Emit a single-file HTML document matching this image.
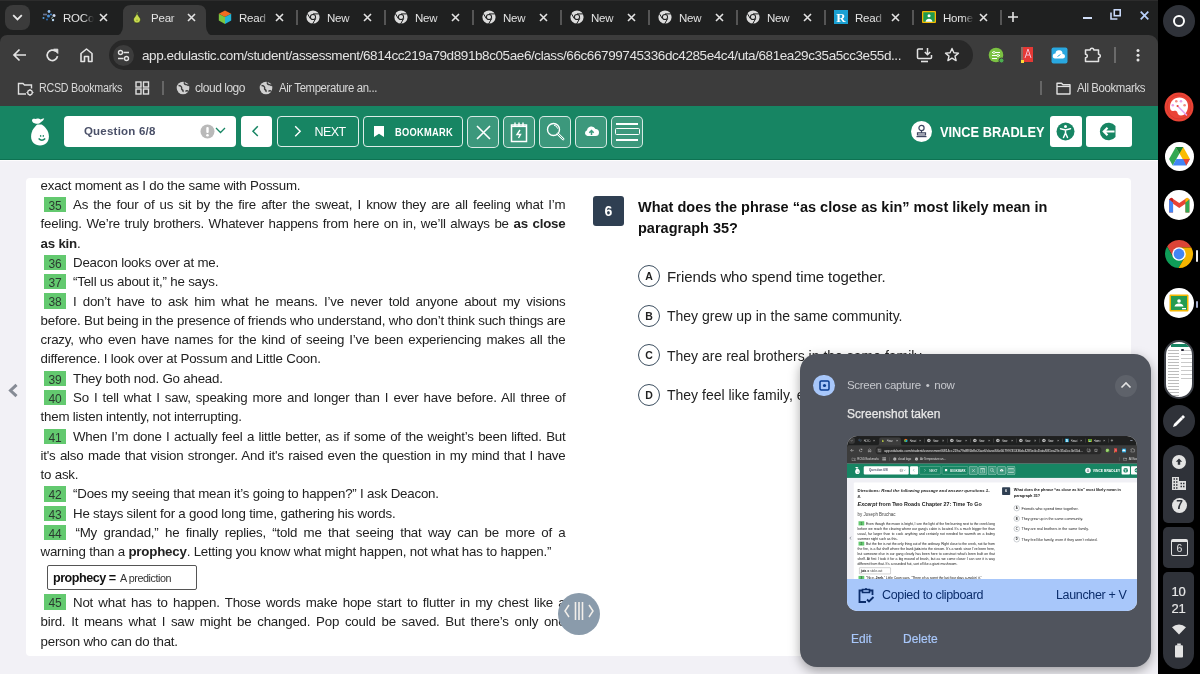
<!DOCTYPE html>
<html><head><meta charset="utf-8"><style>
*{margin:0;padding:0;box-sizing:border-box}
html,body{width:1200px;height:674px;overflow:hidden;background:#000;font-family:"Liberation Sans",sans-serif}
body>div{will-change:transform}
.a{position:absolute}
#win{position:absolute;left:0;top:0;width:1158px;height:674px;background:#f2f1f6;overflow:hidden}
.tabs{position:absolute;left:0;top:0;width:1158px;height:35px;background:#1f2020;border-top:1px solid #2c2c2c}
.toolbar{position:absolute;left:0;top:35px;width:1158px;height:71px;background:#3c3c3c;border-top-left-radius:7px;border-top-right-radius:9px}
.hdr{position:absolute;left:0;top:106px;width:1158px;height:54px;background:#178563;border-bottom:1.6px solid #0e7252;box-shadow:0 1px 0 rgba(255,255,255,.8)}
.card{position:absolute;left:26px;top:178px;width:1105px;height:478px;background:#fff;border-radius:4px}
.shelf{position:absolute;left:1158px;top:0;width:42px;height:674px;background:#000}
/* tabs */
.tab{position:absolute;top:0;width:88px;height:35px}
.ti{position:absolute;left:6px;top:9px}
.tt{position:absolute;left:28px;top:11.5px;font-size:11.5px;line-height:13px;color:#e3e3e3;width:31px;overflow:hidden;white-space:nowrap;letter-spacing:-0.2px;-webkit-mask-image:linear-gradient(90deg,#000 65%,transparent 100%)}
.tx{position:absolute;left:64px;top:13px;width:9px;height:9px}
.tx svg{display:block}
.tsep{position:absolute;top:10px;width:1.5px;height:15px;background:#555}
.atab{position:absolute;left:113px;top:5px;width:103px;height:31px}
.dd{position:absolute;left:5px;top:5px;width:25px;height:25px;border-radius:8px;background:#3b3b3b}
/* passage */
.pl{position:absolute;left:40.5px;width:525px;font-size:13.3px;letter-spacing:-0.2px;line-height:19.3px;color:#222;white-space:nowrap;margin-top:0.85px}
.pl.j{text-align:justify;text-align-last:justify;white-space:normal}
.pl.ind{left:73px;width:492.5px}
.pl b{font-weight:bold}
.pn{position:absolute;left:44px;width:22px;height:15.3px;background:#63c96f;color:#2b3a30;font-size:12px;line-height:18px;text-align:center;letter-spacing:-0.1px}
.pbox{position:absolute;left:47px;top:564.5px;width:150px;height:25px;border:1.3px solid #555;border-radius:2px;line-height:22px;padding-left:5px;color:#111;white-space:nowrap}
/* header */
.hbtn{position:absolute;top:116px;height:31px;border-radius:4px}
.wbtn{background:#fff}
.obtn{border:1.5px solid rgba(255,255,255,.85)}
.ibtn{border:1.5px solid rgba(255,255,255,.8);background:rgba(255,255,255,.16);width:32px;top:116px;height:32px;border-radius:5px}
/* question */
.qn{position:absolute;left:593px;top:196px;width:31px;height:30px;background:#2f3f52;border-radius:3px;color:#fff;font-weight:bold;font-size:14px;line-height:30px;text-align:center}
.qt{position:absolute;left:638px;top:197px;font-size:14.5px;font-weight:bold;line-height:20.5px;color:#111;white-space:nowrap}
.opt{position:absolute;left:638px;width:22px;height:22px;border:1.2px solid #3d4f60;border-radius:50%;font-size:10.5px;font-weight:bold;color:#222;text-align:center;line-height:20px}
.ot{position:absolute;left:667px;font-size:14px;color:#222;white-space:nowrap;line-height:16px}
/* popup */
.popup{position:absolute;left:800px;top:354px;width:351px;height:313px;background:#50545d;border-radius:17px;box-shadow:0 4px 12px rgba(0,0,0,.35);overflow:hidden}
.pill{position:absolute;left:1163px;width:31px;background:#2f3239}
</style></head><body>
<div id="win">

<div class="tabs"></div><div class="a" style="left:0;top:30px;width:1158px;height:20px;background:#1f2020"></div>
<div class="dd"><svg class="a" style="left:7px;top:9px" width="11" height="7" viewBox="0 0 11 7"><path d="M1.2 1.2L5.5 5.4 9.8 1.2" stroke="#e8e8e8" stroke-width="1.8" fill="none"/></svg></div>
<svg class="atab" viewBox="0 0 103 31"><path d="M0 31 Q10 31 10 21 V8 Q10 0 18 0 H85 Q93 0 93 8 V21 Q93 31 103 31 Z" fill="#3c3c3c"/></svg>
<div class="tab" style="left:35px"><svg class="ti" width="16" height="16" viewBox="0 0 16 16"><g fill="#4a90d9"><circle cx="8" cy="2.5" r="1.4" fill="#9cc3f0"/><circle cx="3" cy="5.5" r="0.9" fill="#7a86a8"/><circle cx="5" cy="5.5" r="0.9" fill="#7a86a8"/><circle cx="7.5" cy="7" r="1.5"/><circle cx="10" cy="5.5" r="0.9"/><circle cx="13" cy="6.5" r="1.5" fill="#cfd8f0"/><circle cx="2.5" cy="9" r="1" fill="#5aa0e0"/><circle cx="6" cy="10.5" r="1" fill="#2a6ab0"/><circle cx="12" cy="11" r="1.2" fill="#b8d8f0"/><path d="M10 9.5l2.5-2" stroke="#8aa" stroke-width="1"/></g></svg><span class="tt">ROCo</span><span class="tx"><svg viewBox="0 0 9 9" width="9" height="9"><path d="M1 1L8 8M8 1L1 8" stroke="#e3e3e3" stroke-width="1.6"/></svg></span></div>
<div class="tab" style="left:123px"><svg class="ti" width="16" height="16" viewBox="0 0 16 16"><path d="M8 5c-.7 0-1 .6-1.2 1.4-.3 1-2.3 2-2.3 4.3 0 2 1.6 3.3 3.5 3.3s3.5-1.3 3.5-3.3c0-2.3-2-3.3-2.3-4.3C9 5.6 8.7 5 8 5z" fill="#c9dc4e" stroke="#26301a" stroke-width=".6"/><path d="M7.8 4.6l.9-1.2" stroke="#7bb03c" stroke-width="1"/><circle cx="8" cy="11.3" r=".9" fill="#9aaa40"/></svg><span class="tt">Pear</span><span class="tx"><svg viewBox="0 0 9 9" width="9" height="9"><path d="M1 1L8 8M8 1L1 8" stroke="#e3e3e3" stroke-width="1.6"/></svg></span></div>
<div class="tab" style="left:211px"><svg class="ti" width="16" height="16" viewBox="0 0 16 16"><path d="M8 1.5l6.2 3.2L8 8 1.8 4.7z" fill="#f26b21"/><path d="M1.8 4.7L8 8v7L1.8 11.6z" fill="#7dc63e"/><path d="M14.2 4.7L8 8v7l6.2-3.4z" fill="#21b5d6"/></svg><span class="tt">Read</span><span class="tx"><svg viewBox="0 0 9 9" width="9" height="9"><path d="M1 1L8 8M8 1L1 8" stroke="#e3e3e3" stroke-width="1.6"/></svg></span></div>
<div class="tab" style="left:299px"><svg class="ti" width="16" height="16" viewBox="0 0 16 16"><circle cx="8" cy="8" r="6.6" fill="#dcdcdc"/><circle cx="8" cy="8" r="3.1" fill="#1f2020"/><circle cx="8" cy="8" r="2.1" fill="#dcdcdc"/><path d="M8 4.9h6.2M5.3 9.6L2.2 4.3M10.7 9.6L7.6 14.9" stroke="#1f2020" stroke-width="1"/></svg><span class="tt">New</span><span class="tx"><svg viewBox="0 0 9 9" width="9" height="9"><path d="M1 1L8 8M8 1L1 8" stroke="#e3e3e3" stroke-width="1.6"/></svg></span></div>
<div class="tab" style="left:387px"><svg class="ti" width="16" height="16" viewBox="0 0 16 16"><circle cx="8" cy="8" r="6.6" fill="#dcdcdc"/><circle cx="8" cy="8" r="3.1" fill="#1f2020"/><circle cx="8" cy="8" r="2.1" fill="#dcdcdc"/><path d="M8 4.9h6.2M5.3 9.6L2.2 4.3M10.7 9.6L7.6 14.9" stroke="#1f2020" stroke-width="1"/></svg><span class="tt">New</span><span class="tx"><svg viewBox="0 0 9 9" width="9" height="9"><path d="M1 1L8 8M8 1L1 8" stroke="#e3e3e3" stroke-width="1.6"/></svg></span></div>
<div class="tab" style="left:475px"><svg class="ti" width="16" height="16" viewBox="0 0 16 16"><circle cx="8" cy="8" r="6.6" fill="#dcdcdc"/><circle cx="8" cy="8" r="3.1" fill="#1f2020"/><circle cx="8" cy="8" r="2.1" fill="#dcdcdc"/><path d="M8 4.9h6.2M5.3 9.6L2.2 4.3M10.7 9.6L7.6 14.9" stroke="#1f2020" stroke-width="1"/></svg><span class="tt">New</span><span class="tx"><svg viewBox="0 0 9 9" width="9" height="9"><path d="M1 1L8 8M8 1L1 8" stroke="#e3e3e3" stroke-width="1.6"/></svg></span></div>
<div class="tab" style="left:563px"><svg class="ti" width="16" height="16" viewBox="0 0 16 16"><circle cx="8" cy="8" r="6.6" fill="#dcdcdc"/><circle cx="8" cy="8" r="3.1" fill="#1f2020"/><circle cx="8" cy="8" r="2.1" fill="#dcdcdc"/><path d="M8 4.9h6.2M5.3 9.6L2.2 4.3M10.7 9.6L7.6 14.9" stroke="#1f2020" stroke-width="1"/></svg><span class="tt">New</span><span class="tx"><svg viewBox="0 0 9 9" width="9" height="9"><path d="M1 1L8 8M8 1L1 8" stroke="#e3e3e3" stroke-width="1.6"/></svg></span></div>
<div class="tab" style="left:651px"><svg class="ti" width="16" height="16" viewBox="0 0 16 16"><circle cx="8" cy="8" r="6.6" fill="#dcdcdc"/><circle cx="8" cy="8" r="3.1" fill="#1f2020"/><circle cx="8" cy="8" r="2.1" fill="#dcdcdc"/><path d="M8 4.9h6.2M5.3 9.6L2.2 4.3M10.7 9.6L7.6 14.9" stroke="#1f2020" stroke-width="1"/></svg><span class="tt">New</span><span class="tx"><svg viewBox="0 0 9 9" width="9" height="9"><path d="M1 1L8 8M8 1L1 8" stroke="#e3e3e3" stroke-width="1.6"/></svg></span></div>
<div class="tab" style="left:739px"><svg class="ti" width="16" height="16" viewBox="0 0 16 16"><circle cx="8" cy="8" r="6.6" fill="#dcdcdc"/><circle cx="8" cy="8" r="3.1" fill="#1f2020"/><circle cx="8" cy="8" r="2.1" fill="#dcdcdc"/><path d="M8 4.9h6.2M5.3 9.6L2.2 4.3M10.7 9.6L7.6 14.9" stroke="#1f2020" stroke-width="1"/></svg><span class="tt">New</span><span class="tx"><svg viewBox="0 0 9 9" width="9" height="9"><path d="M1 1L8 8M8 1L1 8" stroke="#e3e3e3" stroke-width="1.6"/></svg></span></div>
<div class="tab" style="left:827px"><svg class="ti" width="16" height="16" viewBox="0 0 16 16"><rect x="1" y="1" width="14" height="14" fill="#1aa0d2"/><text x="8" y="13" font-family="Liberation Serif" font-weight="bold" font-size="13" fill="#fff" text-anchor="middle">R</text></svg><span class="tt">Read</span><span class="tx"><svg viewBox="0 0 9 9" width="9" height="9"><path d="M1 1L8 8M8 1L1 8" stroke="#e3e3e3" stroke-width="1.6"/></svg></span></div>
<div class="tab" style="left:915px"><svg class="ti" width="16" height="16" viewBox="0 0 16 16"><rect x="1" y="2" width="14" height="12" rx="1" fill="#f6b800"/><rect x="2.3" y="3.3" width="11.4" height="9.4" fill="#1e9b4f"/><circle cx="8" cy="6.8" r="1.5" fill="#fff"/><path d="M4.5 12.7c.3-2 1.8-3 3.5-3s3.2 1 3.5 3z" fill="#fff"/></svg><span class="tt">Home</span><span class="tx"><svg viewBox="0 0 9 9" width="9" height="9"><path d="M1 1L8 8M8 1L1 8" stroke="#e3e3e3" stroke-width="1.6"/></svg></span></div>
<div class="tsep" style="left:296px"></div>
<div class="tsep" style="left:384px"></div>
<div class="tsep" style="left:472px"></div>
<div class="tsep" style="left:560px"></div>
<div class="tsep" style="left:648px"></div>
<div class="tsep" style="left:736px"></div>
<div class="tsep" style="left:824px"></div>
<div class="tsep" style="left:912px"></div>
<div class="tsep" style="left:1000px"></div>

<svg class="a" style="left:1007px;top:11px" width="12" height="12" viewBox="0 0 12 12"><path d="M6 1V11M1 6H11" stroke="#e3e3e3" stroke-width="1.6"/></svg>
<div class="a" style="left:1083px;top:17.3px;width:9px;height:1.6px;background:#d0def8"></div>
<svg class="a" style="left:1110px;top:9px" width="11" height="11" viewBox="0 0 11 11"><rect x="4.3" y="0.8" width="5.9" height="5.9" fill="#111" stroke="#c8d8f8" stroke-width="1.6"/><path d="M1 3.6V10H7.4" stroke="#c8d8f8" stroke-width="1.6" fill="none"/></svg>
<svg class="a" style="left:1139.5px;top:10.5px" width="9" height="9" viewBox="0 0 9 9"><path d="M.7.7L8.3 8.3M8.3.7L.7 8.3" stroke="#b8d0fa" stroke-width="1.7"/></svg>


<div class="toolbar"></div>
<svg class="a" style="left:12px;top:48px" width="15" height="14" viewBox="0 0 15 14"><path d="M14 7H2M7.5 1.5L2 7l5.5 5.5" stroke="#e3e3e3" stroke-width="1.7" fill="none"/></svg>
<svg class="a" style="left:45px;top:48px" width="15" height="15" viewBox="0 0 15 15"><path d="M12.5 8.2A5.2 5.2 0 1 1 10.8 3.4" stroke="#e3e3e3" stroke-width="1.7" fill="none"/><path d="M8.6 1.2h4.2v4.2z" fill="#e3e3e3" stroke="#e3e3e3" stroke-width="1"/></svg>
<svg class="a" style="left:79px;top:47px" width="15" height="16" viewBox="0 0 15 16"><path d="M2 14.5V6.5L7.5 2 13 6.5V14.5H9.5V9.5H5.5V14.5Z" stroke="#e3e3e3" stroke-width="1.6" fill="none" stroke-linejoin="round"/></svg>
<div class="a" style="left:109px;top:40px;width:864px;height:30px;border-radius:15px;background:#282828"></div>
<div class="a" style="left:113px;top:45px;width:21px;height:21px;border-radius:50%;background:#3c3c3c"></div>
<svg class="a" style="left:116px;top:48px" width="15" height="15" viewBox="0 0 15 15"><circle cx="4.5" cy="4.5" r="2" stroke="#e3e3e3" stroke-width="1.4" fill="none"/><path d="M7.5 4.5H13M2 10.5H7.5" stroke="#e3e3e3" stroke-width="1.4"/><circle cx="10.5" cy="10.5" r="2" stroke="#e3e3e3" stroke-width="1.4" fill="none"/></svg>
<div class="a" style="left:142px;top:48px;font-size:13.5px;letter-spacing:-0.415px;color:#e3e3e3;white-space:nowrap;line-height:16px">app.edulastic.com/student/assessment/6814cc219a79d891b8c05ae6/class/66c66799745336dc4285e4c4/uta/681ea29c35a5cc3e55d...</div>
<svg class="a" style="left:916px;top:47px" width="17" height="16" viewBox="0 0 17 16"><path d="M7 2H2.5A1 1 0 0 0 1.5 3V10.5A1 1 0 0 0 2.5 11.5H14.5A1 1 0 0 0 15.5 10.5V8" stroke="#e3e3e3" stroke-width="1.5" fill="none"/><path d="M11.5 1V7.5M8.8 5l2.7 2.7L14.2 5" stroke="#e3e3e3" stroke-width="1.5" fill="none"/><path d="M5 14.5H12" stroke="#e3e3e3" stroke-width="1.6"/></svg>
<svg class="a" style="left:944px;top:47px" width="16" height="16" viewBox="0 0 16 16"><path d="M8 1.5l1.9 4.2 4.6.4-3.5 3 1.1 4.5L8 11.2 3.9 13.6 5 9.1l-3.5-3 4.6-.4z" stroke="#e3e3e3" stroke-width="1.4" fill="none" stroke-linejoin="round"/></svg>
<svg class="a" style="left:988px;top:47px" width="17" height="17" viewBox="0 0 17 17"><circle cx="8" cy="8" r="7.3" fill="#7bc242"/><path d="M4 5.5H12M4 8.5H12M4 11.5H9" stroke="#fff" stroke-width="1"/><circle cx="6" cy="5.5" r="1.1" fill="#7bc242" stroke="#fff" stroke-width=".8"/><circle cx="10" cy="8.5" r="1.1" fill="#7bc242" stroke="#fff" stroke-width=".8"/><circle cx="13.5" cy="13.5" r="2.5" fill="#4caf50" stroke="#3c3c3c" stroke-width="1"/></svg>
<svg class="a" style="left:1020px;top:46px" width="14" height="18" viewBox="0 0 14 18"><rect x="1" y="1" width="12" height="15" fill="#e53935"/><rect x="1" y="1" width="2" height="15" fill="#8d6e63"/><path d="M5 12l3-9 3 9M6 9h4" stroke="#f8bbd0" stroke-width="1" fill="none"/><rect x="1" y="14" width="3" height="3" fill="#fdd835"/></svg>
<svg class="a" style="left:1051px;top:47px" width="17" height="17" viewBox="0 0 17 17"><rect x="0.5" y="0.5" width="16" height="16" rx="2" fill="#29a8e0"/><path d="M4 11.5a2.5 2.5 0 0 1 .5-5 3.5 3.5 0 0 1 7 .5 2.2 2.2 0 0 1 .5 4.5z" fill="#fff"/><path d="M6.5 9.5l3-2" stroke="#29a8e0" stroke-width="1"/></svg>
<svg class="a" style="left:1083px;top:46px" width="20" height="18" viewBox="0 0 20 18"><path d="M2.5 4H7.2A1.8 1.8 0 0 1 10.8 4H15.5V8.2A1.8 1.8 0 0 1 15.5 11.8V15.5H2.5V11.8A1.8 1.8 0 0 0 2.5 8.2Z" stroke="#e3e3e3" stroke-width="1.5" fill="none" stroke-linejoin="round"/></svg>
<div class="a" style="left:1114px;top:47px;width:1.5px;height:16px;background:#6a6a6a"></div>
<svg class="a" style="left:1135px;top:46px" width="6" height="18" viewBox="0 0 6 18"><circle cx="3" cy="4.5" r="1.5" fill="#e3e3e3"/><circle cx="3" cy="9.2" r="1.5" fill="#e3e3e3"/><circle cx="3" cy="13.9" r="1.5" fill="#e3e3e3"/></svg>
<!-- bookmarks -->
<svg class="a" style="left:17px;top:82px" width="17" height="14" viewBox="0 0 17 14"><path d="M9 12H1.5V1.5H6L7.5 3H14.5V6.5" stroke="#e0e0e0" stroke-width="1.4" fill="none"/><circle cx="13" cy="10.5" r="2.3" stroke="#e0e0e0" stroke-width="1.3" fill="none"/><path d="M13 7v1.2M13 12.8V14M9.5 10.5h1.2M15.3 10.5h1.2" stroke="#e0e0e0" stroke-width="1.2"/></svg>
<div class="a" style="left:38.8px;top:82px;font-size:12px;letter-spacing:-0.3px;color:#d8d8d8;white-space:nowrap;line-height:13px;transform:scaleX(0.893);transform-origin:0 0">RCSD Bookmarks</div>
<svg class="a" style="left:135px;top:81px" width="15" height="14" viewBox="0 0 15 14"><rect x="1" y="1" width="5" height="5" stroke="#e0e0e0" stroke-width="1.4" fill="none"/><rect x="8.5" y="1" width="5" height="5" stroke="#e0e0e0" stroke-width="1.4" fill="none"/><rect x="1" y="8" width="5" height="5" stroke="#e0e0e0" stroke-width="1.4" fill="none"/><rect x="8.5" y="8" width="5" height="5" stroke="#e0e0e0" stroke-width="1.4" fill="none"/></svg>
<div class="a" style="left:162px;top:81px;width:1.5px;height:14px;background:#666"></div>
<svg class="a" style="left:176px;top:81px" width="14" height="14" viewBox="0 0 14 14"><circle cx="7" cy="7" r="6.3" fill="#d0d0d0"/><path d="M2.5 4.5c1.5 0 2.5.5 3 1.5s-.5 2 .5 2.5 1.5 1 1 2.5M8.5 1.2c-.5 1 0 2 1 2.3s2.5.2 3.2 1.5M12 10c-1-.5-2-.3-2.5.5" stroke="#3c3c3c" stroke-width="1.4" fill="none"/></svg>
<div class="a" style="left:195px;top:82px;font-size:12px;letter-spacing:-0.47px;color:#d8d8d8;white-space:nowrap;line-height:13px">cloud logo</div>
<svg class="a" style="left:259px;top:81px" width="14" height="14" viewBox="0 0 14 14"><circle cx="7" cy="7" r="6.3" fill="#d0d0d0"/><path d="M2.5 4.5c1.5 0 2.5.5 3 1.5s-.5 2 .5 2.5 1.5 1 1 2.5M8.5 1.2c-.5 1 0 2 1 2.3s2.5.2 3.2 1.5M12 10c-1-.5-2-.3-2.5.5" stroke="#3c3c3c" stroke-width="1.4" fill="none"/></svg>
<div class="a" style="left:278.6px;top:82px;font-size:12px;letter-spacing:-0.4px;transform:scaleX(0.947);transform-origin:0 0;color:#d8d8d8;white-space:nowrap;line-height:13px">Air Temperature an...</div>
<div class="a" style="left:1040px;top:81px;width:1.5px;height:14px;background:#666"></div>
<svg class="a" style="left:1056px;top:82px" width="15" height="13" viewBox="0 0 15 13"><path d="M1 1.2H5.5L7 2.8H14V12H1Z" stroke="#e0e0e0" stroke-width="1.4" fill="none" stroke-linejoin="round"/><path d="M1 4.5H14" stroke="#e0e0e0" stroke-width="1.2"/></svg>
<div class="a" style="left:1077px;top:82px;font-size:12px;letter-spacing:-0.4px;transform:scaleX(0.952);transform-origin:0 0;color:#d8d8d8;white-space:nowrap;line-height:13px">All Bookmarks</div>


<div class="hdr"></div>
<svg class="a" style="left:25px;top:114px" width="30" height="36" viewBox="0 0 30 36"><path d="M7 6.6C6.8 5.2 8.6 4.5 10.3 5 11.8 4.1 14.4 4.4 15.4 5.5 16.8 5 17.9 4.6 19.2 4.2 18.7 5.9 17.6 7 16.1 8 15 9.5 13 10 11 9.8 9 9.5 7.1 8.4 7 6.6Z" fill="#fff"/><path d="M12.3 10.5C9.8 12.6 6.1 16.5 6.1 22.5 6.1 28 9.6 31.5 15 31.5 20.4 31.5 23.9 28 23.9 22.5 23.9 16.5 19.6 12.4 16.6 10.5Z" fill="#fff"/><ellipse cx="15.6" cy="21.9" rx=".75" ry=".9" fill="#178563"/><ellipse cx="18.3" cy="21.9" rx=".75" ry=".9" fill="#178563"/><path d="M13.6 24.6Q16.9 28 20.2 24.6" stroke="#178563" stroke-width="1.4" fill="none"/></svg>
<div class="hbtn wbtn" style="left:64px;width:172px"></div>
<div class="a" style="left:83.9px;top:124px;font-size:11.5px;font-weight:bold;letter-spacing:0.23px;color:#4a5068;white-space:nowrap;line-height:14px">Question 6/8</div>
<svg class="a" style="left:200px;top:124px" width="15" height="15" viewBox="0 0 15 15"><circle cx="7.5" cy="7.5" r="7" fill="#b9b9b9"/><rect x="6.3" y="3" width="2.4" height="6" rx="1" fill="#fff"/><circle cx="7.5" cy="11.3" r="1.3" fill="#fff"/></svg>
<svg class="a" style="left:215px;top:127px" width="11" height="7" viewBox="0 0 11 7"><path d="M1 1L5.5 5.5 10 1" stroke="#178563" stroke-width="1.3" fill="none"/></svg>
<div class="hbtn wbtn" style="left:241px;width:31px"></div>
<svg class="a" style="left:251px;top:124px" width="8" height="14" viewBox="0 0 8 14"><path d="M6.8 2.3L2 7.2 6.8 12" stroke="#178563" stroke-width="1.5" fill="none"/></svg>
<div class="hbtn obtn" style="left:276.5px;width:82.5px;top:115.8px;height:31.6px"></div>
<svg class="a" style="left:294px;top:125px" width="8" height="13" viewBox="0 0 8 13"><path d="M1.2 1.3l5 5-5 5" stroke="#fff" stroke-width="1.4" fill="none"/></svg>
<div class="a" style="left:314.5px;top:125px;font-size:12.5px;color:#fff;white-space:nowrap;line-height:14px;letter-spacing:-0.6px">NEXT</div>
<div class="hbtn obtn" style="left:363px;width:99.5px;top:115.8px;height:31.6px"></div>
<svg class="a" style="left:374px;top:126px" width="10" height="11" viewBox="0 0 10 11"><path d="M0 0H10V11L5 7.8 0 11Z" fill="#fff"/></svg>
<div class="a" style="left:395px;top:126.5px;font-size:10px;font-weight:bold;color:#fff;white-space:nowrap;line-height:12px;letter-spacing:0.3px;transform:scaleX(0.93);transform-origin:0 0">BOOKMARK</div>
<div class="hbtn ibtn" style="left:467px"></div>
<svg class="a" style="left:476px;top:124.5px" width="15" height="15" viewBox="0 0 15 15"><path d="M1 1L14 14M14 1L1 14" stroke="#fff" stroke-width="1.6"/></svg>
<div class="hbtn ibtn" style="left:503px"></div>
<svg class="a" style="left:510px;top:121px" width="18" height="22" viewBox="0 0 18 22"><rect x="1.5" y="4" width="15" height="16.5" fill="none" stroke="#fff" stroke-width="1.5"/><path d="M5 1.5V6M9 1.5V6M13 1.5V6" stroke="#fff" stroke-width="1.4"/><path d="M1.5 5.5H16.5" stroke="#fff" stroke-width="1.2"/><path d="M10 9L7 13.5H10.5L8.5 17" stroke="#fff" stroke-width="1.4" fill="none"/></svg>
<div class="hbtn ibtn" style="left:539px"></div>
<svg class="a" style="left:546px;top:122px" width="19" height="19" viewBox="0 0 19 19"><circle cx="7.5" cy="7.5" r="6" stroke="#fff" stroke-width="1.4" fill="none"/><path d="M11.8 11.8L17.2 17.2" stroke="#fff" stroke-width="2.4" stroke-linecap="round"/><path d="M11.9 11.9L17.1 17.1" stroke="#3a9c7f" stroke-width=".9" stroke-linecap="round"/><path d="M8 3.2a4.3 4.3 0 0 1 3.6 3.4" stroke="#fff" stroke-width="1" fill="none"/></svg>
<div class="hbtn ibtn" style="left:575px"></div>
<svg class="a" style="left:584px;top:125px" width="15" height="12" viewBox="0 0 15 12"><path d="M3.5 11A3 3 0 0 1 3 5.2 4.5 4.5 0 0 1 11.5 4 3.5 3.5 0 0 1 11.5 11Z" fill="#fff"/><path d="M7.5 10V5.5M5.3 7.7L7.5 5.5 9.7 7.7" stroke="#3a9c7f" stroke-width="1.5" fill="none"/></svg>
<div class="hbtn ibtn" style="left:611px"></div>
<div class="a" style="left:616px;top:122.5px;width:22px;height:2.5px;background:#fff"></div>
<div class="a" style="left:615px;top:128.3px;width:25px;height:7px;border:1.6px solid #fff;border-radius:1.5px"></div>
<div class="a" style="left:616px;top:138.5px;width:22px;height:2.5px;background:#fff"></div>
<div class="a" style="left:911px;top:121px;width:21px;height:21px;border-radius:50%;background:#fff"></div>
<svg class="a" style="left:915px;top:124px" width="13" height="14" viewBox="0 0 13 14"><circle cx="6.5" cy="4" r="2.6" stroke="#3d4560" stroke-width="1.2" fill="none"/><path d="M6.5 6.6V8.3M2.5 8.8H10.5V11H2.5Z" stroke="#3d4560" stroke-width="1.2" fill="none"/><path d="M1.5 12.6H11.5" stroke="#3d4560" stroke-width="1.2"/></svg>
<div class="a" style="left:939.5px;top:123px;font-size:15px;font-weight:bold;color:#fff;white-space:nowrap;line-height:17px;transform:scaleX(0.853);transform-origin:0 0">VINCE BRADLEY</div>
<div class="hbtn wbtn" style="left:1050px;width:31.5px;border-radius:3px"></div>
<svg class="a" style="left:1056px;top:122px" width="19" height="19" viewBox="0 0 19 19"><circle cx="9.5" cy="9.5" r="9" fill="#178563"/><circle cx="9.5" cy="4.6" r="1.5" fill="#fff"/><path d="M4.5 6.8L9.5 8 14.5 6.8M9.5 8V11M9.5 11L7.5 15.5M9.5 11L11.5 15.5" stroke="#fff" stroke-width="1.5" fill="none" stroke-linecap="round"/></svg>
<div class="hbtn wbtn" style="left:1086px;width:45.5px;border-radius:3px"></div>
<svg class="a" style="left:1099px;top:122px" width="20" height="19" viewBox="0 0 20 19"><path d="M16.5 4A8.8 8.8 0 1 0 16.5 15Z" fill="#178563"/><path d="M4.5 9.5H15.5M8.5 5.8L4.8 9.5 8.5 13.2" stroke="#fff" stroke-width="2.2" fill="none"/></svg>

<div class="card"></div>
<div class="pl" style="top:175.0px">exact moment as I do the same with Possum.</div>
<span class="pn" style="top:197.0px">35</span>
<div class="pl j ind" style="top:194.3px">As the four of us sit by the fire after the sweat, I know they are all feeling what I’m</div>
<div class="pl j" style="top:213.6px">feeling. We’re truly brothers. Whatever happens from here on in, we’ll always be <b>as close</b></div>
<div class="pl" style="top:232.9px"><b>as kin</b>.</div>
<span class="pn" style="top:254.9px">36</span>
<div class="pl ind" style="top:252.2px">Deacon looks over at me.</div>
<span class="pn" style="top:274.1px">37</span>
<div class="pl ind" style="top:271.4px">“Tell us about it,” he says.</div>
<span class="pn" style="top:293.4px">38</span>
<div class="pl j ind" style="top:290.7px">I don’t have to ask him what he means. I’ve never told anyone about my visions</div>
<div class="pl j" style="top:310.0px">before. But being in the presence of friends who understand, who don’t think such things are</div>
<div class="pl j" style="top:329.3px">crazy, who even have names for the kind of seeing I’ve been experiencing makes all the</div>
<div class="pl" style="top:348.6px">difference. I look over at Possum and Little Coon.</div>
<span class="pn" style="top:370.6px">39</span>
<div class="pl ind" style="top:367.9px">They both nod. Go ahead.</div>
<span class="pn" style="top:389.9px">40</span>
<div class="pl j ind" style="top:387.2px">So I tell what I saw, speaking more and longer than I ever have before. All three of</div>
<div class="pl" style="top:406.5px">them listen intently, not interrupting.</div>
<span class="pn" style="top:428.5px">41</span>
<div class="pl j ind" style="top:425.8px">When I’m done I actually feel a little better, as if some of the weight’s been lifted. But</div>
<div class="pl j" style="top:445.1px">it's also made that vision stronger. And it's raised even the question in my mind that I have</div>
<div class="pl" style="top:464.3px">to ask.</div>
<span class="pn" style="top:486.3px">42</span>
<div class="pl ind" style="top:483.6px">“Does my seeing that mean it’s going to happen?” I ask Deacon.</div>
<span class="pn" style="top:505.6px">43</span>
<div class="pl ind" style="top:502.9px">He stays silent for a good long time, gathering his words.</div>
<span class="pn" style="top:524.9px">44</span>
<div class="pl j ind" style="top:522.2px;padding-left:2.5px">“My grandad,” he finally replies, “told me that seeing that way can be more of a</div>
<div class="pl" style="top:541.5px">warning than a <b>prophecy</b>. Letting you know what might happen, not what has to happen.”</div>
<span class="pn" style="top:594.4px">45</span>
<div class="pl j ind" style="top:591.7px">Not what has to happen. Those words make hope start to flutter in my chest like a</div>
<div class="pl j" style="top:611.2px">bird. It means what I saw might be changed. Pop could be saved. But there’s only one</div>
<div class="pl" style="top:630.7px">person who can do that.</div>

<div class="pbox"><b style="font-size:12.6px;letter-spacing:-0.5px">prophecy =</b> <span style="font-size:10.8px;color:#333;letter-spacing:-0.45px">A prediction</span></div>

<div class="qn">6</div>
<div class="qt">What does the phrase “as close as kin” most likely mean in<br>paragraph 35?</div>
<div class="opt" style="top:265px">A</div><div class="ot" style="top:269px;font-size:15px;letter-spacing:-0.1px">Friends who spend time together.</div>
<div class="opt" style="top:304.5px">B</div><div class="ot" style="top:308px">They grew up in the same community.</div>
<div class="opt" style="top:344px">C</div><div class="ot" style="top:348px">They are real brothers in the same family.</div>
<div class="opt" style="top:383.5px">D</div><div class="ot" style="top:387px">They feel like family, even if they aren’t related.</div>


<svg class="a" style="left:8px;top:383px" width="11" height="15" viewBox="0 0 11 15"><path d="M8.5 1.8L2.5 7.5 8.5 13.2" stroke="#868b95" stroke-width="3" fill="none"/></svg>
<div class="a" style="left:558px;top:593px;width:42px;height:42px;border-radius:50%;background:#8a9bab"></div>
<svg class="a" style="left:563px;top:599px" width="32" height="24" viewBox="0 0 32 24"><path d="M6 6L2 12l4 6M26 6l4 6-4 6" stroke="#f2efea" stroke-width="1.5" fill="none"/><path d="M12.5 3V21M16 3V21M19.5 3V21" stroke="#f2efea" stroke-width="1.6"/></svg>

</div>

<div class="shelf"></div>
<div class="a" style="left:1163px;top:5px;width:32px;height:32px;border-radius:50%;background:#2f3239"></div>
<div class="a" style="left:1172.8px;top:14.8px;width:12.4px;height:12.4px;border-radius:50%;border:2.1px solid #fff"></div>
<svg class="a" style="left:1164px;top:92px" width="30" height="30" viewBox="0 0 30 30"><circle cx="15" cy="15" r="14.5" fill="#ea4335"/><circle cx="15" cy="15" r="12" fill="none" stroke="#d93a2e" stroke-width="1"/><path d="M15.5 5.5C20.8 5.5 24 9.5 24 14 24 18.5 21.5 23.5 17 23.5 14.5 23.5 13.8 22 13.5 20.8 13 19 11.5 18.5 9.5 19 7.5 19.5 6 18 6 15 6 9.5 10 5.5 15.5 5.5Z" fill="#fff"/><circle cx="12.3" cy="9.2" r="1.3" fill="#f28b82"/><circle cx="17" cy="9.2" r="1.3" fill="#e9a0e8"/><circle cx="8.8" cy="13.2" r="1.3" fill="#e9a0e8"/><circle cx="20.6" cy="13.2" r="1.3" fill="#f28b82"/><path d="M14.5 15L22.5 23" stroke="#e6a0f0" stroke-width="1.6" stroke-linecap="round"/><circle cx="13.6" cy="14" r="1.1" fill="#ea4335"/></svg>
<div class="a" style="left:1164.5px;top:141.5px;width:29px;height:29px;border-radius:50%;background:#fff"></div>
<svg class="a" style="left:1167.5px;top:145.5px" width="23" height="20.5" viewBox="0 0 22 19" preserveAspectRatio="none"><path d="M7.5 1H14.5L21 12H14z" fill="#fbbc04"/><path d="M7.5 1L1 12l3.5 6L11 7z" fill="#34a853"/><path d="M4.5 18H17.5L21 12H8z" fill="#4285f4"/><path d="M17.5 18L21 12H14.5z" fill="#ea4335"/><path d="M7.5 1L11 7 14.5 1z" fill="#188038"/></svg>
<div class="a" style="left:1164px;top:190px;width:30px;height:30px;border-radius:50%;background:#fff"></div>
<svg class="a" style="left:1167.5px;top:195.5px" width="22.5" height="17.5" viewBox="0 0 20 16" preserveAspectRatio="none"><path d="M1 3v12h3.5V7l5.5 4 5.5-4v8H19V3l-2-1.5L10 6.5 3 1.5z" fill="#ea4335"/><path d="M1 3v12h3.5V6z" fill="#4285f4"/><path d="M15.5 6v9H19V3z" fill="#34a853"/><path d="M15.5 6L19 3l-2-1.5-1.5 1z" fill="#fbbc04"/><path d="M1 3l3.5 3V2.5L3 1.5z" fill="#c5221f"/></svg>
<svg class="a" style="left:1163.7px;top:239.3px" width="30" height="30" viewBox="0 0 30 30"><path d="M15.00 8.40L27.35 8.40A14 14 0 0 0 3.11 7.61L9.28 18.30Z" fill="#db4437"/><path d="M9.28 18.30L3.11 7.61A14 14 0 0 0 14.54 28.99L20.72 18.30Z" fill="#0f9d58"/><path d="M20.72 18.30L14.54 28.99A14 14 0 0 0 27.35 8.40L15.00 8.40Z" fill="#f4b400"/><circle cx="15" cy="15" r="6.8" fill="#fff"/><circle cx="15" cy="15" r="5.4" fill="#4285f4"/></svg>
<div class="a" style="left:1196px;top:249.5px;width:2px;height:11.5px;background:#eee;border-radius:1px"></div>
<div class="a" style="left:1164px;top:288px;width:30px;height:30px;border-radius:50%;background:#fff"></div>
<svg class="a" style="left:1169px;top:294px" width="20" height="18" viewBox="0 0 20 18"><rect x="0.5" y="0.5" width="19" height="17" rx="1" fill="#f6b800"/><rect x="2" y="2" width="16" height="14" fill="#259c51"/><circle cx="10" cy="7" r="1.8" fill="#fff"/><path d="M5.5 12.5c.3-2 2-3 4.5-3s4.2 1 4.5 3z" fill="#fff"/><rect x="13" y="14" width="4" height="1.3" fill="#fff"/></svg>
<div class="a" style="left:1195.5px;top:301px;width:2px;height:7px;background:#a8b0d0;border-radius:1px"></div>
<div class="a" style="left:1164px;top:339.5px;width:30px;height:59px;border-radius:15px;background:#fff;border:2px solid #3c3f46;overflow:hidden">
 <div class="a" style="left:5px;top:1.5px;width:18px;height:3px;background:#178563"></div>
 <div class="a" style="left:2px;top:8px;width:11px;height:46px;opacity:.55;background:repeating-linear-gradient(180deg,#888 0 1px,transparent 1px 3px)"></div>
 <div class="a" style="left:15px;top:8px;width:11px;height:30px;opacity:.45;background:repeating-linear-gradient(180deg,#888 0 1px,transparent 1px 4px)"></div>
 <div class="a" style="left:15px;top:6.5px;width:2.5px;height:2.5px;border-radius:50%;background:#223"></div>
</div>
<div class="a" style="left:1163px;top:405px;width:32px;height:32px;border-radius:50%;background:#2f3239"></div>
<svg class="a" style="left:1171px;top:413px" width="16" height="16" viewBox="0 0 16 16"><path d="M2 14l1-3 7-7 2 2-7 7z" fill="#fff"/><path d="M10 4l2-2 2 2-2 2z" fill="#fff"/></svg>
<div class="pill" style="top:444.5px;height:78px;border-radius:15.5px 15.5px 5px 5px"></div>
<div class="a" style="left:1172px;top:455px;width:14px;height:14px;border-radius:50%;background:#e3e3e3"></div>
<svg class="a" style="left:1173px;top:456px" width="12" height="12" viewBox="0 0 12 12"><path d="M6 2.5L2.8 5.8H4.8V8.8H7.2V5.8H9.2z" fill="#2f3239"/></svg>
<svg class="a" style="left:1171px;top:476px" width="16" height="15" viewBox="0 0 16 15"><path d="M1 14V1H8V5H15V14Z" fill="#ddd"/><path d="M2.5 3h1.5M5 3h1.5M2.5 6h1.5M5 6h1.5M2.5 9h1.5M5 9h1.5M2.5 12h1.5M5 12h1.5M9.5 7.5h1.5M12 7.5h1.5M9.5 10.5h1.5M12 10.5h1.5" stroke="#2f3239" stroke-width="1.3"/></svg>
<div class="a" style="left:1171.5px;top:497.5px;width:15px;height:15px;border-radius:50%;background:#e3e3e3;color:#2f3239;font-size:12px;font-weight:bold;text-align:center;line-height:15px">7</div>
<div class="pill" style="top:527px;height:41px;border-radius:5px"></div>
<div class="a" style="left:1170.5px;top:539px;width:17px;height:17px;border:1.6px solid #e3e3e3;border-top-width:3px;border-radius:2px;color:#e3e3e3;font-size:10.5px;text-align:center;line-height:12px">6</div>
<div class="pill" style="top:571.5px;height:96.5px;border-radius:5px 5px 15.5px 15.5px"></div>
<div class="a" style="left:1163px;top:582.5px;width:31px;text-align:center;font-size:13px;line-height:17px;color:#e8e8e8;letter-spacing:-0.2px;-webkit-text-stroke:0.2px #e8e8e8">10<br>21</div>
<svg class="a" style="left:1171px;top:624px" width="16" height="11" viewBox="0 0 16 11"><path d="M1 3.2A10.5 10.5 0 0 1 15 3.2L8 10.5z" fill="#e3e3e3"/></svg>
<svg class="a" style="left:1174px;top:643px" width="10" height="15" viewBox="0 0 10 15"><rect x="3.2" y="0.5" width="3.6" height="2" fill="#e3e3e3"/><rect x="1" y="2.2" width="8" height="12.3" rx="1" fill="#e3e3e3"/></svg>


<div class="popup">
 <div class="a" style="left:13px;top:20.5px;width:21.5px;height:21.5px;border-radius:50%;background:#a8c7fa"></div>
 <svg class="a" style="left:18.5px;top:26px" width="11" height="11" viewBox="0 0 11 11"><rect x="1" y="1" width="9" height="9" rx="1.2" stroke="#0a3d91" stroke-width="1.5" fill="none"/><circle cx="5.5" cy="5.5" r="1.6" fill="#0a3d91"/></svg>
 <div class="a" style="left:47px;top:25px;font-size:11.5px;letter-spacing:-0.3px;color:#c6c8cd;white-space:nowrap;line-height:13px">Screen capture <span style="margin:0 2px">•</span> now</div>
 <div class="a" style="left:315px;top:20.5px;width:22px;height:22px;border-radius:50%;background:#5e626a"></div>
 <svg class="a" style="left:320px;top:27px" width="12" height="8" viewBox="0 0 12 8"><path d="M1.5 6.5L6 2l4.5 4.5" stroke="#e3e3e3" stroke-width="1.6" fill="none"/></svg>
 <div class="a" style="left:47px;top:53px;font-size:12px;color:#e8e8e8;white-space:nowrap;line-height:14px;-webkit-text-stroke:0.25px #e8e8e8">Screenshot taken</div>
 <div class="a" style="left:47px;top:82px;width:290px;height:175px;border-radius:10px;overflow:hidden;background:#fff">
   <div class="a" style="left:0;top:0;width:1158px;height:674px;transform:scale(0.2615);transform-origin:0 0;background:#f0f0f5;overflow:hidden">

<div class="tabs"></div><div class="a" style="left:0;top:30px;width:1158px;height:20px;background:#1f2020"></div>
<div class="dd"><svg class="a" style="left:7px;top:9px" width="11" height="7" viewBox="0 0 11 7"><path d="M1.2 1.2L5.5 5.4 9.8 1.2" stroke="#e8e8e8" stroke-width="1.8" fill="none"/></svg></div>
<svg class="atab" viewBox="0 0 103 31"><path d="M0 31 Q10 31 10 21 V8 Q10 0 18 0 H85 Q93 0 93 8 V21 Q93 31 103 31 Z" fill="#3c3c3c"/></svg>
<div class="tab" style="left:35px"><svg class="ti" width="16" height="16" viewBox="0 0 16 16"><g fill="#4a90d9"><circle cx="8" cy="2.5" r="1.4" fill="#9cc3f0"/><circle cx="3" cy="5.5" r="0.9" fill="#7a86a8"/><circle cx="5" cy="5.5" r="0.9" fill="#7a86a8"/><circle cx="7.5" cy="7" r="1.5"/><circle cx="10" cy="5.5" r="0.9"/><circle cx="13" cy="6.5" r="1.5" fill="#cfd8f0"/><circle cx="2.5" cy="9" r="1" fill="#5aa0e0"/><circle cx="6" cy="10.5" r="1" fill="#2a6ab0"/><circle cx="12" cy="11" r="1.2" fill="#b8d8f0"/><path d="M10 9.5l2.5-2" stroke="#8aa" stroke-width="1"/></g></svg><span class="tt">ROCo</span><span class="tx"><svg viewBox="0 0 9 9" width="9" height="9"><path d="M1 1L8 8M8 1L1 8" stroke="#e3e3e3" stroke-width="1.6"/></svg></span></div>
<div class="tab" style="left:123px"><svg class="ti" width="16" height="16" viewBox="0 0 16 16"><path d="M8 5c-.7 0-1 .6-1.2 1.4-.3 1-2.3 2-2.3 4.3 0 2 1.6 3.3 3.5 3.3s3.5-1.3 3.5-3.3c0-2.3-2-3.3-2.3-4.3C9 5.6 8.7 5 8 5z" fill="#c9dc4e" stroke="#26301a" stroke-width=".6"/><path d="M7.8 4.6l.9-1.2" stroke="#7bb03c" stroke-width="1"/><circle cx="8" cy="11.3" r=".9" fill="#9aaa40"/></svg><span class="tt">Pear</span><span class="tx"><svg viewBox="0 0 9 9" width="9" height="9"><path d="M1 1L8 8M8 1L1 8" stroke="#e3e3e3" stroke-width="1.6"/></svg></span></div>
<div class="tab" style="left:211px"><svg class="ti" width="16" height="16" viewBox="0 0 16 16"><path d="M8 1.5l6.2 3.2L8 8 1.8 4.7z" fill="#f26b21"/><path d="M1.8 4.7L8 8v7L1.8 11.6z" fill="#7dc63e"/><path d="M14.2 4.7L8 8v7l6.2-3.4z" fill="#21b5d6"/></svg><span class="tt">Read</span><span class="tx"><svg viewBox="0 0 9 9" width="9" height="9"><path d="M1 1L8 8M8 1L1 8" stroke="#e3e3e3" stroke-width="1.6"/></svg></span></div>
<div class="tab" style="left:299px"><svg class="ti" width="16" height="16" viewBox="0 0 16 16"><circle cx="8" cy="8" r="6.6" fill="#dcdcdc"/><circle cx="8" cy="8" r="3.1" fill="#1f2020"/><circle cx="8" cy="8" r="2.1" fill="#dcdcdc"/><path d="M8 4.9h6.2M5.3 9.6L2.2 4.3M10.7 9.6L7.6 14.9" stroke="#1f2020" stroke-width="1"/></svg><span class="tt">New</span><span class="tx"><svg viewBox="0 0 9 9" width="9" height="9"><path d="M1 1L8 8M8 1L1 8" stroke="#e3e3e3" stroke-width="1.6"/></svg></span></div>
<div class="tab" style="left:387px"><svg class="ti" width="16" height="16" viewBox="0 0 16 16"><circle cx="8" cy="8" r="6.6" fill="#dcdcdc"/><circle cx="8" cy="8" r="3.1" fill="#1f2020"/><circle cx="8" cy="8" r="2.1" fill="#dcdcdc"/><path d="M8 4.9h6.2M5.3 9.6L2.2 4.3M10.7 9.6L7.6 14.9" stroke="#1f2020" stroke-width="1"/></svg><span class="tt">New</span><span class="tx"><svg viewBox="0 0 9 9" width="9" height="9"><path d="M1 1L8 8M8 1L1 8" stroke="#e3e3e3" stroke-width="1.6"/></svg></span></div>
<div class="tab" style="left:475px"><svg class="ti" width="16" height="16" viewBox="0 0 16 16"><circle cx="8" cy="8" r="6.6" fill="#dcdcdc"/><circle cx="8" cy="8" r="3.1" fill="#1f2020"/><circle cx="8" cy="8" r="2.1" fill="#dcdcdc"/><path d="M8 4.9h6.2M5.3 9.6L2.2 4.3M10.7 9.6L7.6 14.9" stroke="#1f2020" stroke-width="1"/></svg><span class="tt">New</span><span class="tx"><svg viewBox="0 0 9 9" width="9" height="9"><path d="M1 1L8 8M8 1L1 8" stroke="#e3e3e3" stroke-width="1.6"/></svg></span></div>
<div class="tab" style="left:563px"><svg class="ti" width="16" height="16" viewBox="0 0 16 16"><circle cx="8" cy="8" r="6.6" fill="#dcdcdc"/><circle cx="8" cy="8" r="3.1" fill="#1f2020"/><circle cx="8" cy="8" r="2.1" fill="#dcdcdc"/><path d="M8 4.9h6.2M5.3 9.6L2.2 4.3M10.7 9.6L7.6 14.9" stroke="#1f2020" stroke-width="1"/></svg><span class="tt">New</span><span class="tx"><svg viewBox="0 0 9 9" width="9" height="9"><path d="M1 1L8 8M8 1L1 8" stroke="#e3e3e3" stroke-width="1.6"/></svg></span></div>
<div class="tab" style="left:651px"><svg class="ti" width="16" height="16" viewBox="0 0 16 16"><circle cx="8" cy="8" r="6.6" fill="#dcdcdc"/><circle cx="8" cy="8" r="3.1" fill="#1f2020"/><circle cx="8" cy="8" r="2.1" fill="#dcdcdc"/><path d="M8 4.9h6.2M5.3 9.6L2.2 4.3M10.7 9.6L7.6 14.9" stroke="#1f2020" stroke-width="1"/></svg><span class="tt">New</span><span class="tx"><svg viewBox="0 0 9 9" width="9" height="9"><path d="M1 1L8 8M8 1L1 8" stroke="#e3e3e3" stroke-width="1.6"/></svg></span></div>
<div class="tab" style="left:739px"><svg class="ti" width="16" height="16" viewBox="0 0 16 16"><circle cx="8" cy="8" r="6.6" fill="#dcdcdc"/><circle cx="8" cy="8" r="3.1" fill="#1f2020"/><circle cx="8" cy="8" r="2.1" fill="#dcdcdc"/><path d="M8 4.9h6.2M5.3 9.6L2.2 4.3M10.7 9.6L7.6 14.9" stroke="#1f2020" stroke-width="1"/></svg><span class="tt">New</span><span class="tx"><svg viewBox="0 0 9 9" width="9" height="9"><path d="M1 1L8 8M8 1L1 8" stroke="#e3e3e3" stroke-width="1.6"/></svg></span></div>
<div class="tab" style="left:827px"><svg class="ti" width="16" height="16" viewBox="0 0 16 16"><rect x="1" y="1" width="14" height="14" fill="#1aa0d2"/><text x="8" y="13" font-family="Liberation Serif" font-weight="bold" font-size="13" fill="#fff" text-anchor="middle">R</text></svg><span class="tt">Read</span><span class="tx"><svg viewBox="0 0 9 9" width="9" height="9"><path d="M1 1L8 8M8 1L1 8" stroke="#e3e3e3" stroke-width="1.6"/></svg></span></div>
<div class="tab" style="left:915px"><svg class="ti" width="16" height="16" viewBox="0 0 16 16"><rect x="1" y="2" width="14" height="12" rx="1" fill="#f6b800"/><rect x="2.3" y="3.3" width="11.4" height="9.4" fill="#1e9b4f"/><circle cx="8" cy="6.8" r="1.5" fill="#fff"/><path d="M4.5 12.7c.3-2 1.8-3 3.5-3s3.2 1 3.5 3z" fill="#fff"/></svg><span class="tt">Home</span><span class="tx"><svg viewBox="0 0 9 9" width="9" height="9"><path d="M1 1L8 8M8 1L1 8" stroke="#e3e3e3" stroke-width="1.6"/></svg></span></div>
<div class="tsep" style="left:296px"></div>
<div class="tsep" style="left:384px"></div>
<div class="tsep" style="left:472px"></div>
<div class="tsep" style="left:560px"></div>
<div class="tsep" style="left:648px"></div>
<div class="tsep" style="left:736px"></div>
<div class="tsep" style="left:824px"></div>
<div class="tsep" style="left:912px"></div>
<div class="tsep" style="left:1000px"></div>

<svg class="a" style="left:1007px;top:11px" width="12" height="12" viewBox="0 0 12 12"><path d="M6 1V11M1 6H11" stroke="#e3e3e3" stroke-width="1.6"/></svg>
<div class="a" style="left:1083px;top:17.3px;width:9px;height:1.6px;background:#d0def8"></div>
<svg class="a" style="left:1110px;top:9px" width="11" height="11" viewBox="0 0 11 11"><rect x="4.3" y="0.8" width="5.9" height="5.9" fill="#111" stroke="#c8d8f8" stroke-width="1.6"/><path d="M1 3.6V10H7.4" stroke="#c8d8f8" stroke-width="1.6" fill="none"/></svg>
<svg class="a" style="left:1139.5px;top:10.5px" width="9" height="9" viewBox="0 0 9 9"><path d="M.7.7L8.3 8.3M8.3.7L.7 8.3" stroke="#b8d0fa" stroke-width="1.7"/></svg>


<div class="toolbar"></div>
<svg class="a" style="left:12px;top:48px" width="15" height="14" viewBox="0 0 15 14"><path d="M14 7H2M7.5 1.5L2 7l5.5 5.5" stroke="#e3e3e3" stroke-width="1.7" fill="none"/></svg>
<svg class="a" style="left:45px;top:48px" width="15" height="15" viewBox="0 0 15 15"><path d="M12.5 8.2A5.2 5.2 0 1 1 10.8 3.4" stroke="#e3e3e3" stroke-width="1.7" fill="none"/><path d="M8.6 1.2h4.2v4.2z" fill="#e3e3e3" stroke="#e3e3e3" stroke-width="1"/></svg>
<svg class="a" style="left:79px;top:47px" width="15" height="16" viewBox="0 0 15 16"><path d="M2 14.5V6.5L7.5 2 13 6.5V14.5H9.5V9.5H5.5V14.5Z" stroke="#e3e3e3" stroke-width="1.6" fill="none" stroke-linejoin="round"/></svg>
<div class="a" style="left:109px;top:40px;width:864px;height:30px;border-radius:15px;background:#282828"></div>
<div class="a" style="left:113px;top:45px;width:21px;height:21px;border-radius:50%;background:#3c3c3c"></div>
<svg class="a" style="left:116px;top:48px" width="15" height="15" viewBox="0 0 15 15"><circle cx="4.5" cy="4.5" r="2" stroke="#e3e3e3" stroke-width="1.4" fill="none"/><path d="M7.5 4.5H13M2 10.5H7.5" stroke="#e3e3e3" stroke-width="1.4"/><circle cx="10.5" cy="10.5" r="2" stroke="#e3e3e3" stroke-width="1.4" fill="none"/></svg>
<div class="a" style="left:142px;top:48px;font-size:13.5px;letter-spacing:-0.415px;color:#e3e3e3;white-space:nowrap;line-height:16px">app.edulastic.com/student/assessment/6814cc219a79d891b8c05ae6/class/66c66799745336dc4285e4c4/uta/681ea29c35a5cc3e55d...</div>
<svg class="a" style="left:916px;top:47px" width="17" height="16" viewBox="0 0 17 16"><path d="M7 2H2.5A1 1 0 0 0 1.5 3V10.5A1 1 0 0 0 2.5 11.5H14.5A1 1 0 0 0 15.5 10.5V8" stroke="#e3e3e3" stroke-width="1.5" fill="none"/><path d="M11.5 1V7.5M8.8 5l2.7 2.7L14.2 5" stroke="#e3e3e3" stroke-width="1.5" fill="none"/><path d="M5 14.5H12" stroke="#e3e3e3" stroke-width="1.6"/></svg>
<svg class="a" style="left:944px;top:47px" width="16" height="16" viewBox="0 0 16 16"><path d="M8 1.5l1.9 4.2 4.6.4-3.5 3 1.1 4.5L8 11.2 3.9 13.6 5 9.1l-3.5-3 4.6-.4z" stroke="#e3e3e3" stroke-width="1.4" fill="none" stroke-linejoin="round"/></svg>
<svg class="a" style="left:988px;top:47px" width="17" height="17" viewBox="0 0 17 17"><circle cx="8" cy="8" r="7.3" fill="#7bc242"/><path d="M4 5.5H12M4 8.5H12M4 11.5H9" stroke="#fff" stroke-width="1"/><circle cx="6" cy="5.5" r="1.1" fill="#7bc242" stroke="#fff" stroke-width=".8"/><circle cx="10" cy="8.5" r="1.1" fill="#7bc242" stroke="#fff" stroke-width=".8"/><circle cx="13.5" cy="13.5" r="2.5" fill="#4caf50" stroke="#3c3c3c" stroke-width="1"/></svg>
<svg class="a" style="left:1020px;top:46px" width="14" height="18" viewBox="0 0 14 18"><rect x="1" y="1" width="12" height="15" fill="#e53935"/><rect x="1" y="1" width="2" height="15" fill="#8d6e63"/><path d="M5 12l3-9 3 9M6 9h4" stroke="#f8bbd0" stroke-width="1" fill="none"/><rect x="1" y="14" width="3" height="3" fill="#fdd835"/></svg>
<svg class="a" style="left:1051px;top:47px" width="17" height="17" viewBox="0 0 17 17"><rect x="0.5" y="0.5" width="16" height="16" rx="2" fill="#29a8e0"/><path d="M4 11.5a2.5 2.5 0 0 1 .5-5 3.5 3.5 0 0 1 7 .5 2.2 2.2 0 0 1 .5 4.5z" fill="#fff"/><path d="M6.5 9.5l3-2" stroke="#29a8e0" stroke-width="1"/></svg>
<svg class="a" style="left:1083px;top:46px" width="20" height="18" viewBox="0 0 20 18"><path d="M2.5 4H7.2A1.8 1.8 0 0 1 10.8 4H15.5V8.2A1.8 1.8 0 0 1 15.5 11.8V15.5H2.5V11.8A1.8 1.8 0 0 0 2.5 8.2Z" stroke="#e3e3e3" stroke-width="1.5" fill="none" stroke-linejoin="round"/></svg>
<div class="a" style="left:1114px;top:47px;width:1.5px;height:16px;background:#6a6a6a"></div>
<svg class="a" style="left:1135px;top:46px" width="6" height="18" viewBox="0 0 6 18"><circle cx="3" cy="4.5" r="1.5" fill="#e3e3e3"/><circle cx="3" cy="9.2" r="1.5" fill="#e3e3e3"/><circle cx="3" cy="13.9" r="1.5" fill="#e3e3e3"/></svg>
<!-- bookmarks -->
<svg class="a" style="left:17px;top:82px" width="17" height="14" viewBox="0 0 17 14"><path d="M9 12H1.5V1.5H6L7.5 3H14.5V6.5" stroke="#e0e0e0" stroke-width="1.4" fill="none"/><circle cx="13" cy="10.5" r="2.3" stroke="#e0e0e0" stroke-width="1.3" fill="none"/><path d="M13 7v1.2M13 12.8V14M9.5 10.5h1.2M15.3 10.5h1.2" stroke="#e0e0e0" stroke-width="1.2"/></svg>
<div class="a" style="left:38.8px;top:82px;font-size:12px;letter-spacing:-0.3px;color:#d8d8d8;white-space:nowrap;line-height:13px;transform:scaleX(0.893);transform-origin:0 0">RCSD Bookmarks</div>
<svg class="a" style="left:135px;top:81px" width="15" height="14" viewBox="0 0 15 14"><rect x="1" y="1" width="5" height="5" stroke="#e0e0e0" stroke-width="1.4" fill="none"/><rect x="8.5" y="1" width="5" height="5" stroke="#e0e0e0" stroke-width="1.4" fill="none"/><rect x="1" y="8" width="5" height="5" stroke="#e0e0e0" stroke-width="1.4" fill="none"/><rect x="8.5" y="8" width="5" height="5" stroke="#e0e0e0" stroke-width="1.4" fill="none"/></svg>
<div class="a" style="left:162px;top:81px;width:1.5px;height:14px;background:#666"></div>
<svg class="a" style="left:176px;top:81px" width="14" height="14" viewBox="0 0 14 14"><circle cx="7" cy="7" r="6.3" fill="#d0d0d0"/><path d="M2.5 4.5c1.5 0 2.5.5 3 1.5s-.5 2 .5 2.5 1.5 1 1 2.5M8.5 1.2c-.5 1 0 2 1 2.3s2.5.2 3.2 1.5M12 10c-1-.5-2-.3-2.5.5" stroke="#3c3c3c" stroke-width="1.4" fill="none"/></svg>
<div class="a" style="left:195px;top:82px;font-size:12px;letter-spacing:-0.47px;color:#d8d8d8;white-space:nowrap;line-height:13px">cloud logo</div>
<svg class="a" style="left:259px;top:81px" width="14" height="14" viewBox="0 0 14 14"><circle cx="7" cy="7" r="6.3" fill="#d0d0d0"/><path d="M2.5 4.5c1.5 0 2.5.5 3 1.5s-.5 2 .5 2.5 1.5 1 1 2.5M8.5 1.2c-.5 1 0 2 1 2.3s2.5.2 3.2 1.5M12 10c-1-.5-2-.3-2.5.5" stroke="#3c3c3c" stroke-width="1.4" fill="none"/></svg>
<div class="a" style="left:278.6px;top:82px;font-size:12px;letter-spacing:-0.4px;transform:scaleX(0.947);transform-origin:0 0;color:#d8d8d8;white-space:nowrap;line-height:13px">Air Temperature an...</div>
<div class="a" style="left:1040px;top:81px;width:1.5px;height:14px;background:#666"></div>
<svg class="a" style="left:1056px;top:82px" width="15" height="13" viewBox="0 0 15 13"><path d="M1 1.2H5.5L7 2.8H14V12H1Z" stroke="#e0e0e0" stroke-width="1.4" fill="none" stroke-linejoin="round"/><path d="M1 4.5H14" stroke="#e0e0e0" stroke-width="1.2"/></svg>
<div class="a" style="left:1077px;top:82px;font-size:12px;letter-spacing:-0.4px;transform:scaleX(0.952);transform-origin:0 0;color:#d8d8d8;white-space:nowrap;line-height:13px">All Bookmarks</div>


<div class="hdr"></div>
<svg class="a" style="left:25px;top:114px" width="30" height="36" viewBox="0 0 30 36"><path d="M7 6.6C6.8 5.2 8.6 4.5 10.3 5 11.8 4.1 14.4 4.4 15.4 5.5 16.8 5 17.9 4.6 19.2 4.2 18.7 5.9 17.6 7 16.1 8 15 9.5 13 10 11 9.8 9 9.5 7.1 8.4 7 6.6Z" fill="#fff"/><path d="M12.3 10.5C9.8 12.6 6.1 16.5 6.1 22.5 6.1 28 9.6 31.5 15 31.5 20.4 31.5 23.9 28 23.9 22.5 23.9 16.5 19.6 12.4 16.6 10.5Z" fill="#fff"/><ellipse cx="15.6" cy="21.9" rx=".75" ry=".9" fill="#178563"/><ellipse cx="18.3" cy="21.9" rx=".75" ry=".9" fill="#178563"/><path d="M13.6 24.6Q16.9 28 20.2 24.6" stroke="#178563" stroke-width="1.4" fill="none"/></svg>
<div class="hbtn wbtn" style="left:64px;width:172px"></div>
<div class="a" style="left:83.9px;top:124px;font-size:11.5px;font-weight:bold;letter-spacing:0.23px;color:#4a5068;white-space:nowrap;line-height:14px">Question 6/8</div>
<svg class="a" style="left:200px;top:124px" width="15" height="15" viewBox="0 0 15 15"><circle cx="7.5" cy="7.5" r="7" fill="#b9b9b9"/><rect x="6.3" y="3" width="2.4" height="6" rx="1" fill="#fff"/><circle cx="7.5" cy="11.3" r="1.3" fill="#fff"/></svg>
<svg class="a" style="left:215px;top:127px" width="11" height="7" viewBox="0 0 11 7"><path d="M1 1L5.5 5.5 10 1" stroke="#178563" stroke-width="1.3" fill="none"/></svg>
<div class="hbtn wbtn" style="left:241px;width:31px"></div>
<svg class="a" style="left:251px;top:124px" width="8" height="14" viewBox="0 0 8 14"><path d="M6.8 2.3L2 7.2 6.8 12" stroke="#178563" stroke-width="1.5" fill="none"/></svg>
<div class="hbtn obtn" style="left:276.5px;width:82.5px;top:115.8px;height:31.6px"></div>
<svg class="a" style="left:294px;top:125px" width="8" height="13" viewBox="0 0 8 13"><path d="M1.2 1.3l5 5-5 5" stroke="#fff" stroke-width="1.4" fill="none"/></svg>
<div class="a" style="left:314.5px;top:125px;font-size:12.5px;color:#fff;white-space:nowrap;line-height:14px;letter-spacing:-0.6px">NEXT</div>
<div class="hbtn obtn" style="left:363px;width:99.5px;top:115.8px;height:31.6px"></div>
<svg class="a" style="left:374px;top:126px" width="10" height="11" viewBox="0 0 10 11"><path d="M0 0H10V11L5 7.8 0 11Z" fill="#fff"/></svg>
<div class="a" style="left:395px;top:126.5px;font-size:10px;font-weight:bold;color:#fff;white-space:nowrap;line-height:12px;letter-spacing:0.3px;transform:scaleX(0.93);transform-origin:0 0">BOOKMARK</div>
<div class="hbtn ibtn" style="left:467px"></div>
<svg class="a" style="left:476px;top:124.5px" width="15" height="15" viewBox="0 0 15 15"><path d="M1 1L14 14M14 1L1 14" stroke="#fff" stroke-width="1.6"/></svg>
<div class="hbtn ibtn" style="left:503px"></div>
<svg class="a" style="left:510px;top:121px" width="18" height="22" viewBox="0 0 18 22"><rect x="1.5" y="4" width="15" height="16.5" fill="none" stroke="#fff" stroke-width="1.5"/><path d="M5 1.5V6M9 1.5V6M13 1.5V6" stroke="#fff" stroke-width="1.4"/><path d="M1.5 5.5H16.5" stroke="#fff" stroke-width="1.2"/><path d="M10 9L7 13.5H10.5L8.5 17" stroke="#fff" stroke-width="1.4" fill="none"/></svg>
<div class="hbtn ibtn" style="left:539px"></div>
<svg class="a" style="left:546px;top:122px" width="19" height="19" viewBox="0 0 19 19"><circle cx="7.5" cy="7.5" r="6" stroke="#fff" stroke-width="1.4" fill="none"/><path d="M11.8 11.8L17.2 17.2" stroke="#fff" stroke-width="2.4" stroke-linecap="round"/><path d="M11.9 11.9L17.1 17.1" stroke="#3a9c7f" stroke-width=".9" stroke-linecap="round"/><path d="M8 3.2a4.3 4.3 0 0 1 3.6 3.4" stroke="#fff" stroke-width="1" fill="none"/></svg>
<div class="hbtn ibtn" style="left:575px"></div>
<svg class="a" style="left:584px;top:125px" width="15" height="12" viewBox="0 0 15 12"><path d="M3.5 11A3 3 0 0 1 3 5.2 4.5 4.5 0 0 1 11.5 4 3.5 3.5 0 0 1 11.5 11Z" fill="#fff"/><path d="M7.5 10V5.5M5.3 7.7L7.5 5.5 9.7 7.7" stroke="#3a9c7f" stroke-width="1.5" fill="none"/></svg>
<div class="hbtn ibtn" style="left:611px"></div>
<div class="a" style="left:616px;top:122.5px;width:22px;height:2.5px;background:#fff"></div>
<div class="a" style="left:615px;top:128.3px;width:25px;height:7px;border:1.6px solid #fff;border-radius:1.5px"></div>
<div class="a" style="left:616px;top:138.5px;width:22px;height:2.5px;background:#fff"></div>
<div class="a" style="left:911px;top:121px;width:21px;height:21px;border-radius:50%;background:#fff"></div>
<svg class="a" style="left:915px;top:124px" width="13" height="14" viewBox="0 0 13 14"><circle cx="6.5" cy="4" r="2.6" stroke="#3d4560" stroke-width="1.2" fill="none"/><path d="M6.5 6.6V8.3M2.5 8.8H10.5V11H2.5Z" stroke="#3d4560" stroke-width="1.2" fill="none"/><path d="M1.5 12.6H11.5" stroke="#3d4560" stroke-width="1.2"/></svg>
<div class="a" style="left:939.5px;top:123px;font-size:15px;font-weight:bold;color:#fff;white-space:nowrap;line-height:17px;transform:scaleX(0.853);transform-origin:0 0">VINCE BRADLEY</div>
<div class="hbtn wbtn" style="left:1050px;width:31.5px;border-radius:3px"></div>
<svg class="a" style="left:1056px;top:122px" width="19" height="19" viewBox="0 0 19 19"><circle cx="9.5" cy="9.5" r="9" fill="#178563"/><circle cx="9.5" cy="4.6" r="1.5" fill="#fff"/><path d="M4.5 6.8L9.5 8 14.5 6.8M9.5 8V11M9.5 11L7.5 15.5M9.5 11L11.5 15.5" stroke="#fff" stroke-width="1.5" fill="none" stroke-linecap="round"/></svg>
<div class="hbtn wbtn" style="left:1086px;width:45.5px;border-radius:3px"></div>
<svg class="a" style="left:1099px;top:122px" width="20" height="19" viewBox="0 0 20 19"><path d="M16.5 4A8.8 8.8 0 1 0 16.5 15Z" fill="#178563"/><path d="M4.5 9.5H15.5M8.5 5.8L4.8 9.5 8.5 13.2" stroke="#fff" stroke-width="2.2" fill="none"/></svg>

<div class="card" style="top:178px;height:600px"></div>
<div class="pl" style="top:197.6px;font-size:16.5px;letter-spacing:0px"><b>Directions: <i>Read the following passage and answer questions 1-</i></b></div>
<div class="pl" style="top:222.0px;font-size:16.5px;letter-spacing:0px"><b><i>8.</i></b></div>
<div class="pl" style="top:251.0px;font-size:20.5px;font-weight:bold;letter-spacing:0px"><i>Excerpt</i> from Two Roads Chapter 27: Time To Go</div>
<div class="pl" style="top:291.0px;font-size:17px;color:#444;letter-spacing:0px">by Joseph Bruchac</div>
<span class="pn" style="top:326.3px">1</span>
<div class="pl j ind" style="top:323.8px;letter-spacing:-0.3px">Even though the moon is bright, I see the light of the fire burning next to the creek long</div>
<div class="pl j" style="top:343.1px">before we reach the clearing where our gang’s cabin is located. It’s a much bigger fire than</div>
<div class="pl j" style="top:362.4px">usual, far larger than to cook anything and certainly not needed for warmth on a balmy</div>
<div class="pl" style="top:381.7px">summer night such as this.</div>
<span class="pn" style="top:403.5px">2</span>
<div class="pl j ind" style="top:401.0px;letter-spacing:-0.3px">But the fire is not the only thing out of the ordinary. Right close to the creek, not far from</div>
<div class="pl j" style="top:420.3px">the fire, is a flat shelf where the bank <b>juts</b> into the stream. It’s a week since I’ve been here,</div>
<div class="pl j" style="top:439.6px">but someone else in our gang clearly has been here to construct what’s been built on that</div>
<div class="pl j" style="top:458.9px">shelf. At first I took it for a big mound of brush, but as we come closer I can see it is way</div>
<div class="pl" style="top:478.2px">different from that. It’s a rounded hut, sort of like a giant mushroom.</div>
<span class="pn" style="top:535.1px">3</span>
<div class="pl ind" style="top:532.6px;letter-spacing:-0.3px">“Nice, <b>Jeek</b>,” Little Coon says. “Three of us spent the last four days a-makin’ it.”</div>
<div class="pbox" style="top:503px;width:120px"><b style="font-size:13px;letter-spacing:-0.5px">juts =</b> <span style="font-size:11px;color:#333">sticks out</span></div>


<div class="qn">6</div>
<div class="qt">What does the phrase “as close as kin” most likely mean in<br>paragraph 35?</div>
<div class="opt" style="top:265px">A</div><div class="ot" style="top:269px;font-size:15px;letter-spacing:-0.1px">Friends who spend time together.</div>
<div class="opt" style="top:304.5px">B</div><div class="ot" style="top:308px">They grew up in the same community.</div>
<div class="opt" style="top:344px">C</div><div class="ot" style="top:348px">They are real brothers in the same family.</div>
<div class="opt" style="top:383.5px">D</div><div class="ot" style="top:387px">They feel like family, even if they aren’t related.</div>

<svg class="a" style="left:8px;top:383px" width="11" height="15" viewBox="0 0 11 15"><path d="M8.5 1.8L2.5 7.5 8.5 13.2" stroke="#868b95" stroke-width="3" fill="none"/></svg>
</div>
   <div class="a" style="left:0;top:143px;width:290px;height:32px;background:#a8c7fa"></div>
   <svg class="a" style="left:11px;top:151px" width="17" height="17" viewBox="0 0 17 17"><path d="M8 15H1.5V3.5H4.5M11.5 3.5H14.5V8" stroke="#0b2d6b" stroke-width="1.8" fill="none"/><path d="M4.5 2.5h7v3h-7z" stroke="#0b2d6b" stroke-width="1.6" fill="none"/><path d="M8 1V3" stroke="#0b2d6b" stroke-width="1.5"/><path d="M9 12.5l2 2 4.5-4.5" stroke="#0b2d6b" stroke-width="1.8" fill="none"/></svg>
   <div class="a" style="left:35px;top:152px;font-size:12.5px;color:#0b2d6b;white-space:nowrap;line-height:15px;letter-spacing:-0.35px">Copied to clipboard</div>
   <div class="a" style="left:209px;top:152px;font-size:12.5px;color:#0b2d6b;white-space:nowrap;line-height:15px;letter-spacing:-0.35px">Launcher + V</div>
 </div>
 <div class="a" style="left:51px;top:278px;font-size:12px;color:#a8c7fa;white-space:nowrap;line-height:14px;-webkit-text-stroke:0.2px #a8c7fa">Edit</div>
 <div class="a" style="left:103px;top:278px;font-size:12px;color:#a8c7fa;white-space:nowrap;line-height:14px;-webkit-text-stroke:0.2px #a8c7fa">Delete</div>
</div>

</body></html>
